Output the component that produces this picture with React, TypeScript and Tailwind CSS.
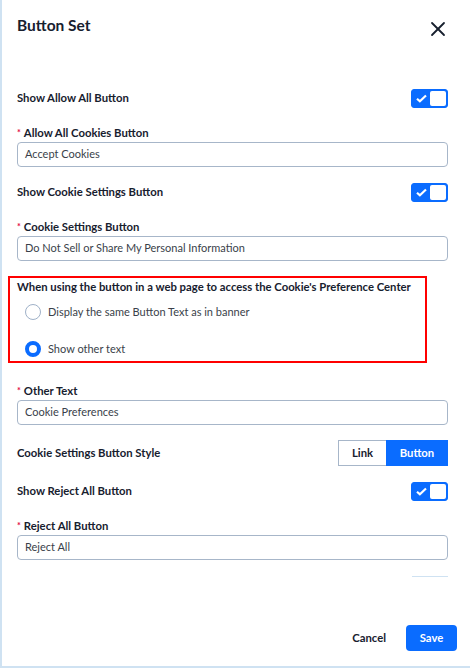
import { X } from "lucide-react";

const font = { fontFamily: '"Lato", "Noto Sans", sans-serif' };

const Toggle = () => (
  <div className="flex h-[19px] w-[37px] items-center rounded-[3px] border border-[#0a6cff] bg-[#0a6cff] p-px">
    <div className="flex flex-1 items-center justify-center">
      <svg viewBox="0 0 12 10" className="h-[9px] w-[11px]">
        <path d="M1 5.2 4.2 8.2 11 1.6" fill="none" stroke="#fff" strokeWidth="2.4" />
      </svg>
    </div>
    <div className="h-full w-[16px] rounded-[2px] bg-white" />
  </div>
);

const ToggleRow = ({ label }: { label: string }) => (
  <div className="flex h-[19px] items-center justify-between">
    <span className="text-[11.3px] font-bold">{label}</span>
    <Toggle />
  </div>
);

const Field = ({ label, value }: { label: string; value: string }) => (
  <div className="flex flex-col">
    <label className="mb-[2px] flex h-[14px] items-center text-[11.3px] font-bold">
      <span className="mr-[3px] text-[9px] text-[#e3063f]">*</span>
      {label}
    </label>
    <div className="flex h-[25px] items-center rounded-[4px] border border-[#a7b6c9] px-[7px] text-[11px] text-[#3a3f4a]">
      {value}
    </div>
  </div>
);

const Radio = ({ checked, label }: { checked?: boolean; label: string }) => (
  <div className="flex items-center gap-[7px]">
    {checked ? (
      <div className="size-[16px] rounded-full border-[4px] border-[#0a6cff] bg-white" />
    ) : (
      <div className="size-[16px] rounded-full border border-[#9fb1c8] bg-white" />
    )}
    <span className="text-[11px] text-[#3a3f4a]">{label}</span>
  </div>
);

export default function App() {
  return (
    <div
      style={font}
      className="flex h-[668px] w-[470px] flex-col overflow-hidden border-b-2 border-l-2 border-[#cfe2f2] bg-white text-[#17202e]"
    >
      <div className="flex items-start justify-between pl-[15px] pr-[20px] pt-[14px]">
        <h1 className="text-[15.5px] font-bold">Button Set</h1>
        <X className="mt-[3px] size-[24px] text-[#17202e]" strokeWidth={1.8} />
      </div>

      <div className="mt-[48px] flex flex-col pl-[15px] pr-[22px]">
        <ToggleRow label="Show Allow All Button" />
        <div className="mt-[18px]">
          <Field label="Allow All Cookies Button" value="Accept Cookies" />
        </div>
        <div className="mt-[16px]">
          <ToggleRow label="Show Cookie Settings Button" />
        </div>
        <div className="mt-[18px]">
          <Field label="Cookie Settings Button" value="Do Not Sell or Share My Personal Information" />
        </div>
      </div>

      <div className="ml-[6px] mr-[43px] mt-[15px] flex flex-col border-2 border-[#ff0000] pb-[4px] pl-[7px]">
        <span className="text-[11.3px] font-bold leading-[17px]">
          When using the button in a web page to access the Cookie&apos;s Preference Center
        </span>
        <div className="ml-[8px] mt-[9px] flex flex-col gap-[20px]">
          <Radio label="Display the same Button Text as in banner" />
          <Radio checked label="Show other text" />
        </div>
      </div>

      <div className="mt-[21px] flex flex-col pl-[15px] pr-[22px]">
        <Field label="Other Text" value="Cookie Preferences" />
        <div className="mt-[15px] flex items-center justify-between">
          <span className="text-[11.3px] font-bold">Cookie Settings Button Style</span>
          <div className="flex h-[26px] text-[11.3px] font-bold">
            <div className="flex w-[48px] items-center justify-center border border-[#a7b6c9] border-r-0">
              Link
            </div>
            <div className="flex w-[62px] items-center justify-center bg-[#0a6cff] text-white">
              Button
            </div>
          </div>
        </div>
        <div className="mt-[16px]">
          <ToggleRow label="Show Reject All Button" />
        </div>
        <div className="mt-[18px]">
          <Field label="Reject All Button" value="Reject All" />
        </div>
        <div className="mt-[16px] flex justify-end">
          <div className="h-px w-[36px] bg-[#cfe2f2]" />
        </div>
      </div>

      <div className="mt-auto flex items-center justify-end gap-[20px] pb-[15px] pr-[13px]">
        <button className="text-[11.3px] font-bold text-[#17202e]">Cancel</button>
        <button className="h-[26px] w-[51px] rounded-[4px] bg-[#0a6cff] text-[11.3px] font-bold text-white">
          Save
        </button>
      </div>
    </div>
  );
}
